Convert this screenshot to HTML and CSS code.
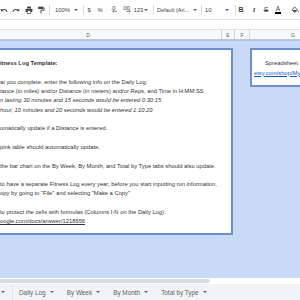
FILE: index.html
```html
<!DOCTYPE html>
<html>
<head>
<meta charset="utf-8">
<link rel="stylesheet" href="styles.css">
</head>
<body>
<div class="toolbar">
  <span class="tb i-undo"><svg viewBox="0 0 10 10" width="8" height="8"><path d="M8.8 7.5 C8 4.2 4.5 3.4 2.4 5.4" fill="none" stroke="#444" stroke-width="1.3"/><path d="M1 3 V6.6 H4.6 Z" fill="#444"/></svg></span>
  <span class="tb i-redo"><svg viewBox="0 0 10 10" width="8" height="8"><path d="M1.2 7.5 C2 4.2 5.5 3.4 7.6 5.4" fill="none" stroke="#444" stroke-width="1.3"/><path d="M9 3 V6.6 H5.4 Z" fill="#444"/></svg></span>
  <span class="tb i-print"><svg viewBox="0 0 10 10" width="8" height="8"><rect x="2.5" y="0.8" width="5" height="2.2" fill="#444"/><rect x="0.8" y="3.4" width="8.4" height="4.2" rx="0.8" fill="#444"/><rect x="2.8" y="5.8" width="4.4" height="3.4" fill="#fff" stroke="#444" stroke-width="0.9"/></svg></span>
  <span class="tb i-paint"><svg viewBox="0 0 10 10" width="8" height="8"><rect x="1.5" y="0.8" width="6" height="3" fill="#444"/><path d="M7.5 2.3 H8.8 V5.2 H5 V9.4" fill="none" stroke="#444" stroke-width="1.2"/></svg></span>
  <span class="sep s1"></span>
  <span class="tt zoom">100%</span>
  <span class="arr a1"></span>
  <span class="sep s2"></span>
  <span class="tt cur">$</span>
  <span class="tt pct">%</span>
  <span class="tt dec1"><span>.0</span><svg viewBox="0 0 6 3" width="5" height="2.5"><path d="M6 1.5 H1 M2.2 0.3 L0.8 1.5 L2.2 2.7" fill="none" stroke="#444" stroke-width="0.8"/></svg></span>
  <span class="tt dec2"><span>.00</span><svg viewBox="0 0 6 3" width="5" height="2.5"><path d="M0 1.5 H5 M3.8 0.3 L5.2 1.5 L3.8 2.7" fill="none" stroke="#444" stroke-width="0.8"/></svg></span>
  <span class="tt fmt">123</span>
  <span class="arr a2"></span>
  <span class="sep s3"></span>
  <span class="tt font">Default (Ari...</span>
  <span class="arr a3"></span>
  <span class="sep s4"></span>
  <span class="tt size">10</span>
  <span class="arr a4"></span>
  <span class="sep s5"></span>
  <span class="tt bold">B</span>
  <span class="tt ital">I</span>
  <span class="tt strike">S</span>
  <span class="tt color"><span>A</span><span class="cbar"></span></span>
  <span class="tb i-fill"><svg viewBox="0 0 10 10" width="8" height="8"><path d="M4.5 1.2 L8.2 4.9 L4.9 8.2 L1.2 4.9 Z" fill="none" stroke="#444" stroke-width="1.1"/><path d="M1.8 4.9 H7.6 L4.9 7.6 Z" fill="#444"/><path d="M9 6 C9.6 7 9.8 7.6 9 8 C8.2 7.6 8.4 7 9 6 Z" fill="#444"/></svg></span>
</div>
<div class="fbar"></div>
<div class="colhead">
  <div class="col cd">D</div>
  <div class="col ce">E</div>
  <div class="col cf">F</div>
  <div class="col cg">G</div>
</div>
<div class="sheet">
  <div class="note">
    <div class="ln strong">itness Log Template:</div>
    <div class="ln"></div>
    <div class="ln">at you complete, enter the following info on the Daily Log:</div>
    <div class="ln">tance (in miles) and/or Distance (in meters) and/or Reps, and Time in H:MM:SS</div>
    <div class="ln em">n lasting 30 minutes and 15 seconds would be entered 0:30:15</div>
    <div class="ln em">hour, 10 minutes and 20 seconds would be entered 1:10:20</div>
    <div class="ln"></div>
    <div class="ln">omatically update if a Distance is entered.</div>
    <div class="ln"></div>
    <div class="ln">pink table should automatically update.</div>
    <div class="ln"></div>
    <div class="ln">the bar chart on the By Week, By Month, and Total by Type tabs should also update.</div>
    <div class="ln"></div>
    <div class="ln">to have a separate Fitness Log every year, before you start inputting run information,</div>
    <div class="ln">opy by going to "File" and selecting "Make a Copy"</div>
    <div class="ln"></div>
    <div class="ln">to protect the cells with formulas (Columns I-N on the Daily Log):</div>
    <div class="ln"><span class="ulink">oogle.com/docs/answer/1218656</span></div>
  </div>
  <div class="credit">
    <div class="ln c1">Spreadsheet created by</div>
    <div class="ln c2"><span class="blink">etsy.com/shop/MyFitnessTemplates</span></div>
  </div>
</div>
<div class="hscroll"><div class="thumb"></div></div>
<div class="tabs">
  <div class="tab frag"><span class="tarr"></span></div>
  <div class="tab"><span>Daily Log</span><span class="tarr"></span></div>
  <div class="tab"><span>By Week</span><span class="tarr"></span></div>
  <div class="tab"><span>By Month</span><span class="tarr"></span></div>
  <div class="tab"><span>Total by Type</span><span class="tarr"></span></div>
</div>
</body>
</html>
```
FILE: styles.css
```css
* { box-sizing: border-box; }
html, body { margin: 0; padding: 0; }
body {
  width: 300px;
  height: 300px;
  overflow: hidden;
  background: #fff;
  font-family: "Liberation Sans", Arial, sans-serif;
  color: #333;
}

/* toolbar */
.toolbar {
  height: 20px;
  display: flex;
  align-items: center;
  white-space: nowrap;
  border-bottom: 1px solid #e6e6e6;
  color: #444;
  font-size: 5.8px;
}
.tb, .tt {
  flex: none;
  display: flex;
  align-items: center;
  justify-content: center;
  height: 12px;
}
.tb { width: 10px; }
.sep { flex: none; width: 1px; height: 10px; background: #dadce0; }
.arr {
  flex: none;
  width: 0; height: 0;
  border-left: 2px solid transparent;
  border-right: 2px solid transparent;
  border-top: 2.5px solid #555;
}
.i-undo { margin-left: -1px; }
.i-redo { margin-left: 2px; }
.i-print { margin-left: 3px; }
.i-paint { margin-left: 2px; }
.s1 { margin-left: 3px; }
.zoom { margin-left: 4px; width: 17px; }
.a1 { margin-left: 3px; }
.s2 { margin-left: 5px; }
.cur { margin-left: 2px; width: 6px; }
.pct { margin-left: 5px; width: 6px; }
.dec1, .dec2 { flex-direction: column; line-height: 5px; }
.dec1 { margin-left: 6px; width: 8px; }
.dec2 { margin-left: 4px; width: 10px; }
.dec1 svg, .dec2 svg { display: block; margin-top: -1px; }
.dec1 svg { align-self: flex-end; }
.dec2 svg { align-self: flex-end; }
.fmt { margin-left: 2px; width: 11px; }
.a2 { margin-left: 0; }
.s3 { margin-left: 5px; }
.font { margin-left: 3px; width: 33px; justify-content: flex-start; font-size: 5.5px; }
.a3 { margin-left: 3px; }
.s4 { margin-left: 4px; }
.size { margin-left: 3px; width: 7px; justify-content: flex-start; }
.a4 { margin-left: 13px; }
.s5 { margin-left: 6px; }
.bold { margin-left: 2px; width: 6px; font-weight: bold; font-size: 7px; }
.ital { margin-left: 7px; width: 6px; font-style: italic; font-size: 7px; font-family: "Liberation Serif", serif; font-weight: bold; }
.strike { margin-left: 6px; width: 6px; text-decoration: line-through; font-size: 7px; }
.color { margin-left: 6px; width: 6px; flex-direction: column; font-size: 6.5px; line-height: 6px; }
.cbar { display: block; width: 6px; height: 1.5px; background: #000; margin-top: 0.5px; }
.i-fill { margin-left: 10px; width: 8px; }

/* formula bar */
.fbar { height: 9px; background: #fff; }

/* column header */
.colhead {
  height: 11px;
  display: flex;
  background: #f8f9fa;
  border-top: 1px solid #e2e3e3;
  border-bottom: 1px solid #c4c7c5;
  font-size: 5px;
  color: #5f6368;
  white-space: nowrap;
}
.col {
  flex: none;
  display: flex;
  align-items: center;
  justify-content: center;
  border-right: 1px solid #d5d7d9;
}
.cd { margin-left: -45px; width: 267px; }
.ce { width: 13px; }
.cf { width: 15px; }
.cg { width: 86px; border-right: none; }

/* sheet area */
.sheet {
  height: 238px;
  background: #c9daf8;
  border-top: 1px solid #a9c2ee;
  display: flex;
  align-items: flex-start;
  padding-top: 7px;
  white-space: nowrap;
  overflow: hidden;
}
.ln {
  height: 9.3px;
  line-height: 9.3px;
  font-size: 5.8px;
}
.strong { font-weight: bold; }
.em { font-style: italic; }
.note {
  flex: none;
  margin-left: -20px;
  width: 253px;
  height: 187px;
  background: #fff;
  border: 2px solid #6d8fcb;
  padding: 9.3px 0 0 18px;
  overflow: hidden;
}
.ulink { text-decoration: underline; }
.credit {
  flex: none;
  margin-left: 17px;
  width: 80px;
  height: 39px;
  background: #fff;
  border: 2px solid #6d8fcb;
  border-right: none;
  padding-top: 9.3px;
  overflow: hidden;
}
.c1 { padding-left: 13px; }
.c2 { padding-left: 2px; }
.blink { color: #1155cc; text-decoration: underline; }

/* horizontal scroll */
.hscroll {
  height: 6px;
  background: #fff;
  padding-top: 1px;
}
.thumb {
  width: 210px;
  height: 3.5px;
  background: #dadce0;
  border-radius: 0 2px 2px 0;
}

/* sheet tabs */
.tabs {
  height: 16px;
  display: flex;
  align-items: stretch;
  background: #f1f3f4;
  font-size: 6.4px;
  color: #5f6368;
  white-space: nowrap;
}
.tab {
  flex: none;
  display: flex;
  align-items: center;
  gap: 4px;
  padding: 0 7px 0 6px;
}
.frag {
  width: 13px;
  padding: 0 0 0 1px;
  border-right: 1px solid #e3e5e7;
}
.tarr {
  width: 0; height: 0;
  border-left: 2px solid transparent;
  border-right: 2px solid transparent;
  border-top: 2.5px solid #5f6368;
}
```
